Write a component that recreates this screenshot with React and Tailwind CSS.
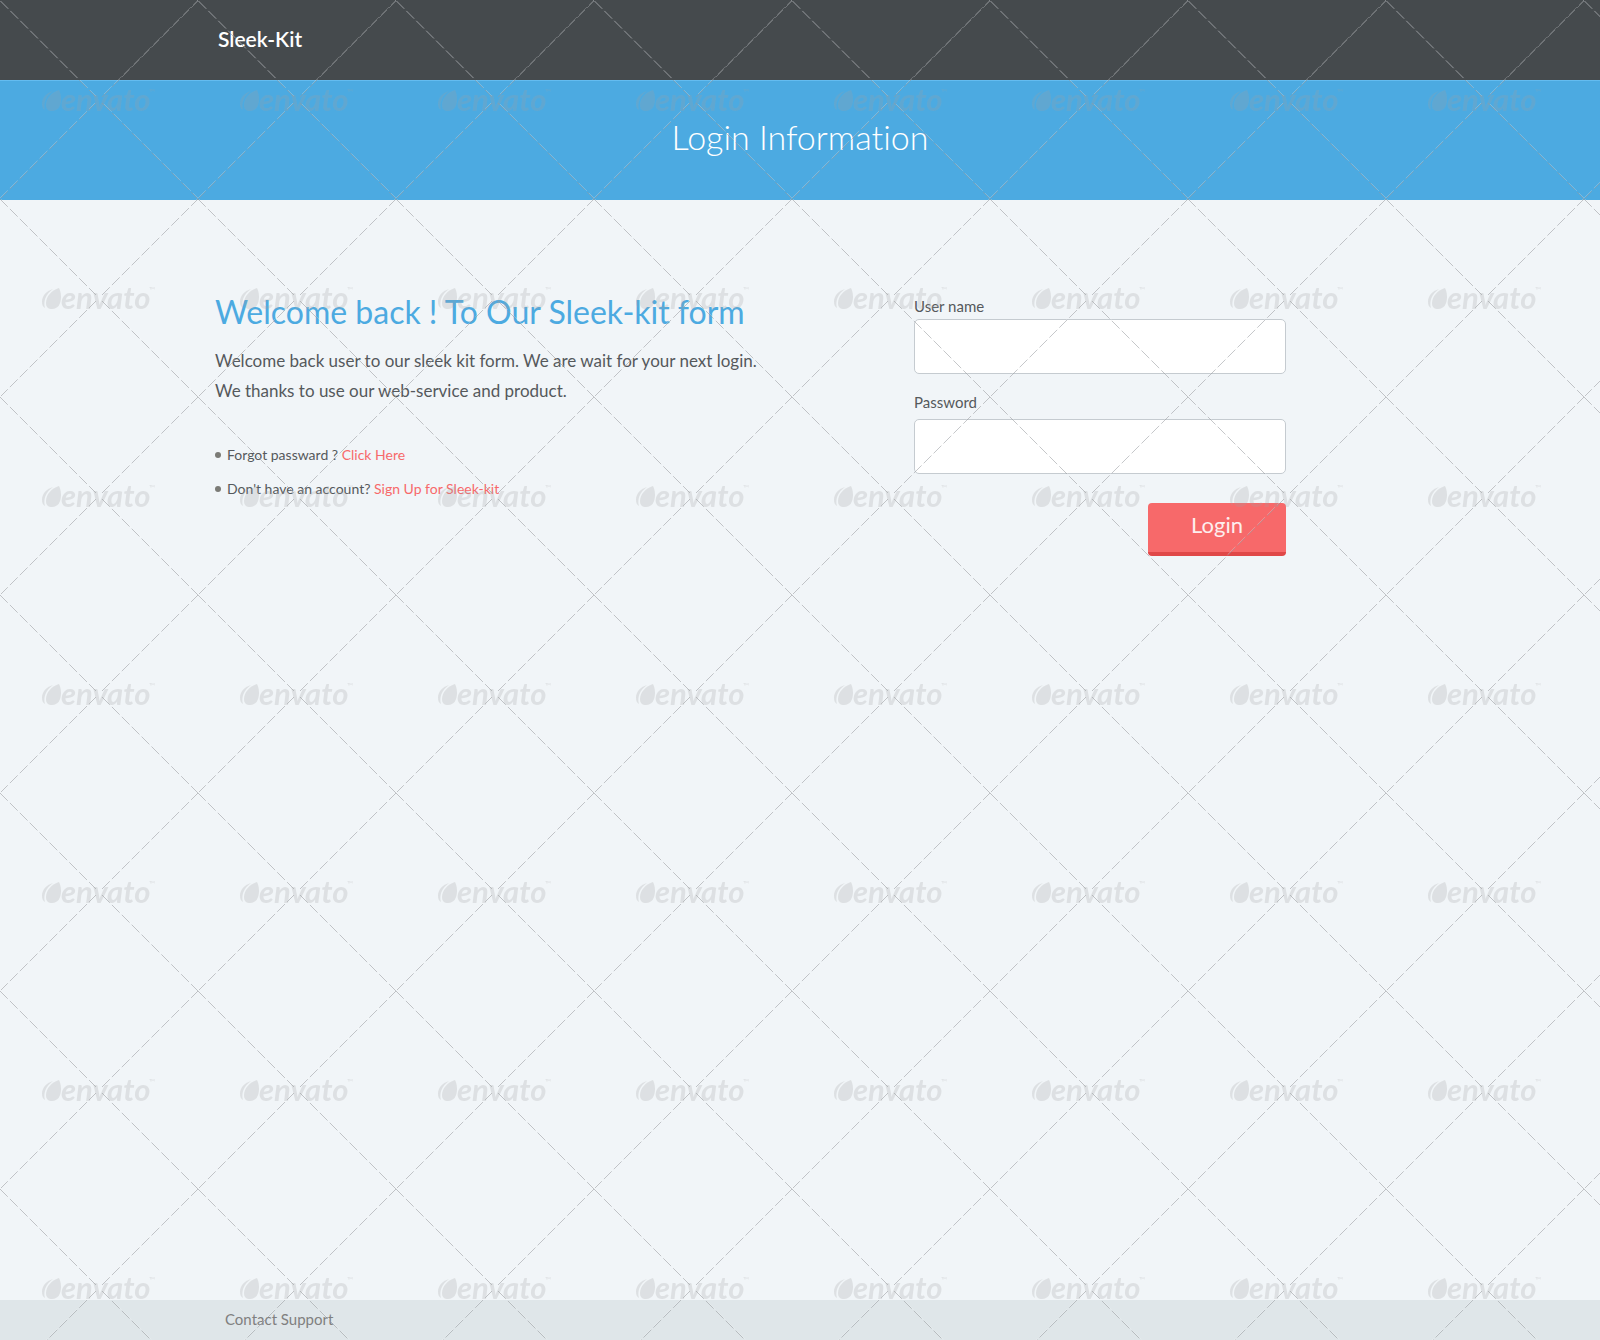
const links = [
  { id: 'forgot', text: 'Forgot passward ?', action: 'Click Here' },
  { id: 'signup', text: "Don't have an account?", action: 'Sign Up for Sleek-kit' },
];

function Field({ id, label, type, labelClass }) {
  return (
    <div className="flex flex-col">
      <label htmlFor={id} className={labelClass}>{label}</label>
      <input
        id={id}
        type={type}
        className="h-[55px] w-full rounded-[5px] border border-[#c5cbd0] bg-white px-4 text-base text-[#50565a] outline-none focus:border-[#4caae1]"
      />
    </div>
  );
}

// Tiled overlay: crossing dashed diagonals with a logo in the middle of each tile
function Watermark() {
  return (
    <svg className="pointer-events-none absolute inset-0 h-full w-full" aria-hidden="true">
      <defs>
        <pattern id="mark" width="198" height="198" patternUnits="userSpaceOnUse">
          <g fill="none" stroke="#ffffff" strokeOpacity="0.2" strokeDasharray="11 3">
            <path d="M1 1L96 96M104 104L198 198M0 198L95 103M104 94L198 0" />
          </g>
          <g fill="none" stroke="#95999c" strokeOpacity="0.55" strokeDasharray="11 3">
            <path d="M0 1L96 97M102 103L198 199M0 199L96 103M102 97L198 1M-1 0L0 1M197 0L198 1" />
          </g>
          <g fill="#a0a0a0" fillOpacity="0.24">
            <path d="M59 90C52 92 46 98 46 105C46 109 48 111 52 111C58 111 61 106 61 99C61 95 60 92 59 90Z" />
            <path d="M53 91C46 93 42 98 42 104C42 107 43 109 45 110C43 103 46 96 53 91Z" />
            <text x="61" y="111" fontFamily="Lato, sans-serif" fontSize="31" fontWeight="700" fontStyle="italic">envato</text>
            <text x="149" y="95" fontFamily="Lato, sans-serif" fontSize="8">™</text>
          </g>
        </pattern>
      </defs>
      <rect width="100%" height="100%" fill="url(#mark)" />
    </svg>
  );
}

export default function App() {
  return (
    <div className="relative flex min-h-screen flex-col overflow-hidden bg-[#f1f5f8] font-['Lato',sans-serif] text-[#55595c] [font-variant-ligatures:none]">
      <header className="bg-[#454a4d]">
        <div className="mx-auto flex h-20 max-w-[1170px] items-center px-[3px] pb-[2px]">
          <a href="#" className="text-[21px] leading-7 font-semibold text-white">Sleek-Kit</a>
        </div>
      </header>

      <section className="flex h-[120px] items-center justify-center border-t border-[#64bcf0] bg-[#4caae1] pb-2">
        <h1 className="text-[34px] leading-10 font-light text-white">Login Information</h1>
      </section>

      <main className="mx-auto grid w-full max-w-[1170px] grow grid-cols-[1fr_471px] items-start pt-[92px]">
        <section>
          <h2 className="text-[32px] leading-10 text-[#4caae1]">Welcome back ! To Our Sleek-kit form</h2>
          <p className="mt-[14px] text-[17px] leading-[30px]">
            Welcome back user to our sleek kit form. We are wait for your next login.
            <br />
            We thanks to use our web-service and product.
          </p>
          <ul className="mt-8">
            {links.map((link) => (
              <li key={link.id} className="flex items-center text-[14px] leading-[34px]">
                <span className="mr-[6px] size-[6px] rounded-full bg-[#7b7b76]" />
                <span>
                  {link.text} <a href="#" className="text-[#f7696a]">{link.action}</a>
                </span>
              </li>
            ))}
          </ul>
        </section>

        <form className="flex max-w-[372px] flex-col" onSubmit={(e) => e.preventDefault()}>
          <Field id="username" label="User name" type="text" labelClass="pt-[3px] pb-px text-[15px] leading-[23px]" />
          <Field id="password" label="Password" type="password" labelClass="pt-[17px] pb-[5px] text-[15px] leading-[23px]" />
          <button
            type="submit"
            className="mt-[29px] h-[53px] w-[138px] self-end rounded-[4px] border-b-4 border-[#e04848] bg-[#f7696a] pb-[5px] text-[22px] leading-7 text-[#fdeeee]"
          >
            Login
          </button>
        </form>
      </main>

      <footer className="bg-[#dfe6e9]">
        <div className="mx-auto flex h-10 max-w-[1170px] items-center px-[10px] pb-[3px]">
          <a href="#" className="text-[15px] leading-5 text-[#808080]">Contact Support</a>
        </div>
      </footer>

      <Watermark />
    </div>
  );
}
